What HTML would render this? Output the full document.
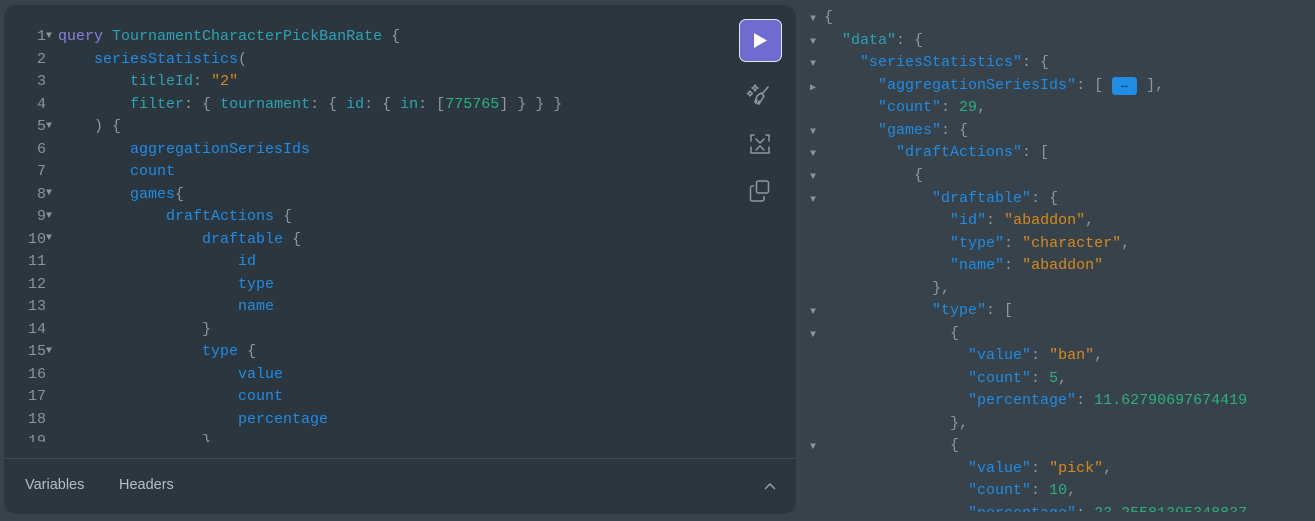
<!DOCTYPE html>
<html><head><meta charset="utf-8"><style>
*{margin:0;padding:0;box-sizing:border-box}
body{width:1315px;height:521px;background:#37424a;overflow:hidden;position:relative;font-family:"Liberation Mono",monospace;font-size:15px}
.panel{position:absolute;left:4px;top:5px;width:792px;height:509px;background:#2c363e;border-radius:12px;overflow:hidden}
.code{position:absolute;left:0;top:14px;width:720px;height:423px;overflow:hidden}
.ln{position:absolute;left:0;width:42px;text-align:right;color:#89939c}
.l{position:absolute;height:22.5px;line-height:22.5px;white-space:pre}
.fa{position:absolute;color:#8a939c;font-size:10px}
.k{color:#8d7fde}.n{color:#2ba3b4}.f{color:#1f8ce6}.s{color:#d58a1e}.p{color:#8e979f}.g{color:#2cb07e}.a{color:#2ba3b4}
.run{position:absolute;left:739px;top:19px;width:43px;height:43px;background:#6f6bd0;border:1.5px solid #e6e6f0;border-radius:7px}
.div{position:absolute;left:4px;top:458px;width:792px;height:1px;background:#3d4850}
.tab{position:absolute;top:477px;font-family:"Liberation Sans",sans-serif;font-size:14.5px;color:#b7bdc2}
.right{position:absolute;left:800px;top:8px;width:515px;height:504px;overflow:hidden}
.btn{display:inline-block;background:#1f8ce6;color:#1a2a38;border-radius:3px;width:25px;height:18px;line-height:18px;text-align:center;font-size:11px;vertical-align:1px}
</style></head><body>
<div class="panel"></div>
<div class="code" style="left:4px;top:26px;height:416px">
<div style="position:relative">
<div class="l ln" style="top:0">1</div><div class="fa" style="left:42px;top:5px">▼</div><div class="l" style="left:54px;top:0"><span class="k">query</span> <span class="n">TournamentCharacterPickBanRate</span> <span class="p">{</span></div>
<div class="l ln" style="top:22.5px">2</div><div class="l" style="left:54px;top:22.5px">    <span class="f">seriesStatistics</span><span class="p">(</span></div>
<div class="l ln" style="top:45px">3</div><div class="l" style="left:54px;top:45px">        <span class="a">titleId</span><span class="p">:</span> <span class="s">"2"</span></div>
<div class="l ln" style="top:67.5px">4</div><div class="l" style="left:54px;top:67.5px">        <span class="a">filter</span><span class="p">: {</span> <span class="a">tournament</span><span class="p">: {</span> <span class="a">id</span><span class="p">: {</span> <span class="a">in</span><span class="p">: [</span><span class="g">775765</span><span class="p">] } } }</span></div>
<div class="l ln" style="top:90px">5</div><div class="fa" style="left:42px;top:95px">▼</div><div class="l" style="left:54px;top:90px">    <span class="p">) {</span></div>
<div class="l ln" style="top:112.5px">6</div><div class="l" style="left:54px;top:112.5px">        <span class="f">aggregationSeriesIds</span></div>
<div class="l ln" style="top:135px">7</div><div class="l" style="left:54px;top:135px">        <span class="f">count</span></div>
<div class="l ln" style="top:157.5px">8</div><div class="fa" style="left:42px;top:162px">▼</div><div class="l" style="left:54px;top:157.5px">        <span class="f">games</span><span class="p">{</span></div>
<div class="l ln" style="top:180px">9</div><div class="fa" style="left:42px;top:185px">▼</div><div class="l" style="left:54px;top:180px">            <span class="f">draftActions</span> <span class="p">{</span></div>
<div class="l ln" style="top:202.5px">10</div><div class="fa" style="left:42px;top:207px">▼</div><div class="l" style="left:54px;top:202.5px">                <span class="f">draftable</span> <span class="p">{</span></div>
<div class="l ln" style="top:225px">11</div><div class="l" style="left:54px;top:225px">                    <span class="f">id</span></div>
<div class="l ln" style="top:247.5px">12</div><div class="l" style="left:54px;top:247.5px">                    <span class="f">type</span></div>
<div class="l ln" style="top:270px">13</div><div class="l" style="left:54px;top:270px">                    <span class="f">name</span></div>
<div class="l ln" style="top:292.5px">14</div><div class="l" style="left:54px;top:292.5px">                <span class="p">}</span></div>
<div class="l ln" style="top:315px">15</div><div class="fa" style="left:42px;top:320px">▼</div><div class="l" style="left:54px;top:315px">                <span class="f">type</span> <span class="p">{</span></div>
<div class="l ln" style="top:337.5px">16</div><div class="l" style="left:54px;top:337.5px">                    <span class="f">value</span></div>
<div class="l ln" style="top:360px">17</div><div class="l" style="left:54px;top:360px">                    <span class="f">count</span></div>
<div class="l ln" style="top:382.5px">18</div><div class="l" style="left:54px;top:382.5px">                    <span class="f">percentage</span></div>
<div class="l ln" style="top:405px">19</div><div class="l" style="left:54px;top:405px">                <span class="p">}</span></div>
</div></div>
<div class="run"><svg width="40" height="40" viewBox="0 0 40 40"><path d="M14 13 L27 20.5 L14 28 Z" fill="#fff"/></svg></div>
<svg style="position:absolute;left:746px;top:82px" width="28" height="28" viewBox="0 0 28 28" fill="none" stroke="#8f989f" stroke-width="1.5" stroke-linecap="round" stroke-linejoin="round">
<path d="M22 5 L16 12"/><path d="M15 11 L18 14 L13 22 L9 20 L11 14 Z"/><path d="M11 18 L9.5 21"/><path d="M13 19 L12 22"/><path d="M9 3 l1 2 l2 1 l-2 1 l-1 2 l-1 -2 l-2 -1 l2 -1 Z"/><path d="M4 9 l1 1.5 l1.5 1 l-1.5 1 l-1 1.5 l-1 -1.5 l-1.5 -1 l1.5 -1 Z"/></svg>
<svg style="position:absolute;left:747px;top:131px" width="26" height="26" viewBox="0 0 26 26" fill="none" stroke="#8f989f" stroke-width="1.5" stroke-linecap="round" stroke-linejoin="round">
<path d="M7 4 H4 V10"/><path d="M19 4 H22 V10"/><path d="M4 16 V22 H22 V16"/><path d="M9 8 L13 12 L17 8"/><path d="M9 19 L13 15 L17 19"/></svg>
<svg style="position:absolute;left:747px;top:178px" width="26" height="26" viewBox="0 0 26 26" fill="none" stroke="#8f989f" stroke-width="1.5" stroke-linecap="round" stroke-linejoin="round">
<rect x="9.5" y="3" width="12" height="12" rx="2"/><path d="M6.5 8 H5.5 a2 2 0 0 0 -2 2 V21 a2 2 0 0 0 2 2 H15 a2 2 0 0 0 2 -2 V18.5"/></svg>
<div class="div"></div>
<div class="tab" style="left:25px">Variables</div>
<div class="tab" style="left:119px">Headers</div>
<svg style="position:absolute;left:763px;top:481px" width="14" height="10" viewBox="0 0 14 10" fill="none" stroke="#9aa2a9" stroke-width="1.4"><path d="M2 8 L7 3 L12 8"/></svg>

<div class="right">
<div style="position:relative">
<div class="fa" style="left:10px;top:6px">▼</div><div class="l" style="left:24px;top:-1px"><span class="p">{</span></div>
<div class="fa" style="left:10px;top:29px">▼</div><div class="l" style="left:24px;top:22px">  <span class="n">"data"</span><span class="p">: {</span></div>
<div class="fa" style="left:10px;top:51px">▼</div><div class="l" style="left:24px;top:44px">    <span class="f">"seriesStatistics"</span><span class="p">: {</span></div>
<div class="fa" style="left:10px;top:74px">▶</div><div class="l" style="left:24px;top:67px">      <span class="f">"aggregationSeriesIds"</span><span class="p">: [ </span><span class="btn">↔</span><span class="p"> ],</span></div>
<div class="l" style="left:24px;top:89px">      <span class="f">"count"</span><span class="p">: </span><span class="g">29</span><span class="p">,</span></div>
<div class="fa" style="left:10px;top:119px">▼</div><div class="l" style="left:24px;top:112px">      <span class="f">"games"</span><span class="p">: {</span></div>
<div class="fa" style="left:10px;top:141px">▼</div><div class="l" style="left:24px;top:134px">        <span class="f">"draftActions"</span><span class="p">: [</span></div>
<div class="fa" style="left:10px;top:164px">▼</div><div class="l" style="left:24px;top:157px">          <span class="p">{</span></div>
<div class="fa" style="left:10px;top:187px">▼</div><div class="l" style="left:24px;top:180px">            <span class="f">"draftable"</span><span class="p">: {</span></div>
<div class="l" style="left:24px;top:202px">              <span class="f">"id"</span><span class="p">: </span><span class="s">"abaddon"</span><span class="p">,</span></div>
<div class="l" style="left:24px;top:225px">              <span class="f">"type"</span><span class="p">: </span><span class="s">"character"</span><span class="p">,</span></div>
<div class="l" style="left:24px;top:247px">              <span class="f">"name"</span><span class="p">: </span><span class="s">"abaddon"</span></div>
<div class="l" style="left:24px;top:270px">            <span class="p">},</span></div>
<div class="fa" style="left:10px;top:299px">▼</div><div class="l" style="left:24px;top:292px">            <span class="f">"type"</span><span class="p">: [</span></div>
<div class="fa" style="left:10px;top:322px">▼</div><div class="l" style="left:24px;top:315px">              <span class="p">{</span></div>
<div class="l" style="left:24px;top:337px">                <span class="f">"value"</span><span class="p">: </span><span class="s">"ban"</span><span class="p">,</span></div>
<div class="l" style="left:24px;top:360px">                <span class="f">"count"</span><span class="p">: </span><span class="g">5</span><span class="p">,</span></div>
<div class="l" style="left:24px;top:382px">                <span class="f">"percentage"</span><span class="p">: </span><span class="g">11.62790697674419</span></div>
<div class="l" style="left:24px;top:405px">              <span class="p">},</span></div>
<div class="fa" style="left:10px;top:434px">▼</div><div class="l" style="left:24px;top:427px">              <span class="p">{</span></div>
<div class="l" style="left:24px;top:450px">                <span class="f">"value"</span><span class="p">: </span><span class="s">"pick"</span><span class="p">,</span></div>
<div class="l" style="left:24px;top:472px">                <span class="f">"count"</span><span class="p">: </span><span class="g">10</span><span class="p">,</span></div>
<div class="l" style="left:24px;top:495px">                <span class="f">"percentage"</span><span class="p">: </span><span class="g">23.25581395348837</span></div>
</div></div>
</body></html>
